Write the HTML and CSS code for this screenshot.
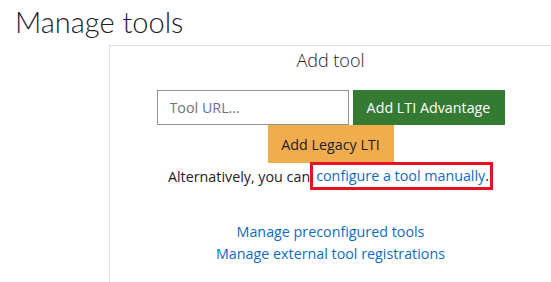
FILE: index.html
```html
<!DOCTYPE html>
<html>
<head>
<meta charset="utf-8">
<link rel="stylesheet" href="styles.css">
</head>
<body>
<h1 class="page-title">Manage tools</h1>
<div class="card">
  <h3 class="card-title">Add tool</h3>
  <div class="add-row">
    <input class="url-input" type="text" placeholder="Tool URL...">
    <button class="btn btn-green">Add LTI Advantage</button>
  </div>
  <div class="legacy-row">
    <button class="btn btn-orange">Add Legacy LTI</button>
  </div>
  <p class="alt-text">Alternatively, you can<span class="highlight"><a href="#" class="link">configure a tool manually</a>.</span></p>
  <div class="manage-links">
    <a href="#" class="link">Manage preconfigured tools</a>
    <a href="#" class="link">Manage external tool registrations</a>
  </div>
</div>
</body>
</html>
```
FILE: styles.css
```css
html, body {
  margin: 0;
  padding: 0;
  background: #fff;
  overflow: hidden;
}
body {
  font-family: "Open Sans", "Noto Sans", sans-serif;
  color: #1d2125;
  font-size: 14.3px;
}
.page-title {
  margin: 0;
  padding: 4px 0 0 15px;
  font-family: "Lato", "Open Sans", sans-serif;
  font-size: 29px;
  font-weight: 300;
  line-height: 35px;
}
.card {
  margin: 6px 0 0 109px;
  width: 442px;
  border: 1px solid #dee2e6;
  border-right: none;
  height: 260px;
  box-sizing: border-box;
  text-align: center;
}
.card-title {
  margin: 0;
  padding-top: 2px;
  font-size: 18px;
  font-weight: 300;
  line-height: 24px;
}
.add-row {
  display: flex;
  justify-content: center;
  gap: 4px;
  margin-top: 18px;
}
.url-input {
  width: 192px;
  height: 35px;
  box-sizing: border-box;
  border: 1px solid #8f959e;
  border-radius: 0;
  padding: 0 12px;
  font-family: inherit;
  font-size: 14.3px;
  color: #1d2125;
  outline: none;
}
.url-input::placeholder {
  color: #6a737b;
}
.btn {
  border: none;
  border-radius: 0;
  font-family: inherit;
  font-size: 14.3px;
  padding: 0;
  white-space: nowrap;
  box-sizing: border-box;
}
.btn-green {
  width: 152px;
  height: 35px;
  background: #357a32;
  color: #fff;
}
.legacy-row {
  display: flex;
  justify-content: center;
}
.btn-orange {
  width: 126px;
  height: 38px;
  background: #f0ad4e;
  color: #1d2125;
}
.alt-text {
  margin: -1px 0 0 0;
  display: flex;
  justify-content: center;
  align-items: center;
  white-space: pre;
}
.highlight {
  border: 3px solid #e81123;
  padding: 0 1px 0 3px;
  line-height: 22px;
}
.link {
  color: #0f6cbf;
  text-decoration: none;
}
.manage-links {
  display: flex;
  flex-direction: column;
  align-items: center;
  margin-top: 31px;
  line-height: 22px;
}
```
